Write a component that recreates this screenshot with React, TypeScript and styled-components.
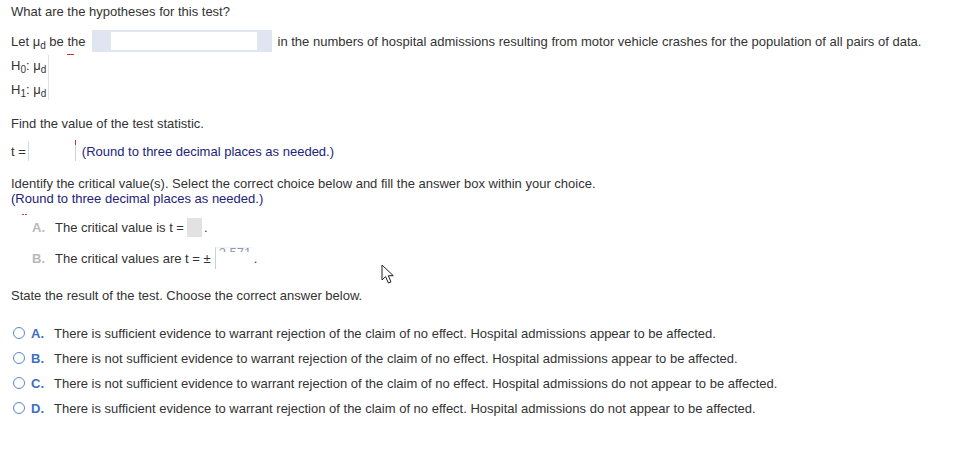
import * as React from "react";
import styled, { createGlobalStyle } from "styled-components";

const GlobalStyle = createGlobalStyle`
  html, body {
    margin: 0;
    padding: 0;
    background: #fff;
  }
  body {
    font-family: "Liberation Sans", Arial, sans-serif;
    font-size: 13px;
    color: #333;
  }
`;

const options = [
  { letter: "A.", text: "There is sufficient evidence to warrant rejection of the claim of no effect. Hospital admissions appear to be affected." },
  { letter: "B.", text: "There is not sufficient evidence to warrant rejection of the claim of no effect. Hospital admissions appear to be affected." },
  { letter: "C.", text: "There is not sufficient evidence to warrant rejection of the claim of no effect. Hospital admissions do not appear to be affected." },
  { letter: "D.", text: "There is sufficient evidence to warrant rejection of the claim of no effect. Hospital admissions do not appear to be affected." },
];

const Mu = () => (
  <>
    μ<Sub>d</Sub>
  </>
);

const App = () => {
  return (
    <>
      <GlobalStyle />
      <Page>
        <Line>What are the hypotheses for this test?</Line>

        <LetRow>
          <span>
            Let <Mu /> be the
          </span>
          <SelectBox>
            <SelectInner />
          </SelectBox>
          <span>
            in the numbers of hospital admissions resulting from motor vehicle crashes for the population of all pairs
            of data.
          </span>
        </LetRow>

        <HypoBlock>
          <HypoLabels>
            <HypoLabel>
              H<Sub>0</Sub>: <Mu />
            </HypoLabel>
            <HypoLabel>
              H<Sub>1</Sub>: <Mu />
            </HypoLabel>
          </HypoLabels>
          <HypoField>
            <RedDash />
          </HypoField>
        </HypoBlock>

        <Line $top={16}>Find the value of the test statistic.</Line>

        <TRow>
          <span>t =</span>
          <TInput>
            <RedTick />
          </TInput>
          <Note>(Round to three decimal places as needed.)</Note>
        </TRow>

        <Para $top={15}>
          Identify the critical value(s). Select the correct choice below and fill the answer box within your choice.
          <Note as="div">(Round to three decimal places as needed.)</Note>
        </Para>

        <Choices>
          <RedDots>
            <Dot />
            <Dot />
          </RedDots>
          <ChoiceRow>
            <ChoiceLetter>A.</ChoiceLetter>
            <span>The critical value is t =</span>
            <GrayBox />
            <span>.</span>
          </ChoiceRow>
          <ChoiceRow>
            <ChoiceLetter>B.</ChoiceLetter>
            <span>The critical values are t = ±</span>
            <ValueBox>
              <Clip>2.571</Clip>
            </ValueBox>
            <span>.</span>
          </ChoiceRow>
        </Choices>

        <Line $top={20}>State the result of the test. Choose the correct answer below.</Line>

        <Options>
          {options.map((o) => (
            <OptionRow key={o.letter}>
              <Radio />
              <OptionLetter>{o.letter}</OptionLetter>
              <span>{o.text}</span>
            </OptionRow>
          ))}
        </Options>

        <Cursor width="15" height="21" viewBox="0 0 15 21">
          <path
            d="M1 1 L1 16 L4.6 12.6 L7.4 19 L10 17.9 L7.3 11.7 L12.3 11.7 Z"
            fill="#fff"
            stroke="#222"
            strokeWidth="1"
            strokeLinejoin="round"
          />
        </Cursor>
      </Page>
    </>
  );
};

const Page = styled.div`
  position: relative;
  width: 965px;
  height: 465px;
  box-sizing: border-box;
  padding: 4px 11px 0;
  overflow: hidden;
`;

const Line = styled.div<{ $top?: number }>`
  line-height: 16px;
  margin-top: ${(p) => p.$top ?? 0}px;
`;

const Para = styled.div<{ $top?: number }>`
  line-height: 15px;
  margin-top: ${(p) => p.$top ?? 0}px;
`;

const Sub = styled.sub`
  font-size: 10px;
  vertical-align: -3px;
  line-height: 0;
`;

const LetRow = styled.div`
  display: flex;
  align-items: center;
  height: 22px;
  margin-top: 10px;
  gap: 6px;
  white-space: nowrap;
`;

const SelectBox = styled.div`
  width: 180px;
  height: 22px;
  box-sizing: border-box;
  padding: 2px 15px 2px 19px;
  background: #dfe6f0;
`;

const SelectInner = styled.div`
  height: 100%;
  background: #fff;
`;

const HypoBlock = styled.div`
  display: flex;
  margin-top: 2px;
`;

const HypoLabels = styled.div`
  display: flex;
  flex-direction: column;
  padding-top: 4px;
  gap: 8px;
`;

const HypoLabel = styled.div`
  line-height: 16px;
  height: 16px;
`;

const HypoField = styled.div`
  position: relative;
  width: 40px;
  height: 45px;
  margin-left: 2px;
  margin-top: 1px;
  border-left: 1px solid #e2e2e2;
`;

const RedDash = styled.span`
  position: absolute;
  left: 18px;
  top: -1px;
  width: 7px;
  height: 1px;
  background: #c0392b;
`;

const TRow = styled.div`
  display: flex;
  align-items: center;
  height: 20px;
  margin-top: 9px;
`;

const TInput = styled.div`
  position: relative;
  width: 48px;
  height: 20px;
  margin-left: 2px;
  box-sizing: border-box;
  border-left: 1px solid #d3dbe6;
  border-right: 1px solid #c9d2de;
  margin-right: 6px;
`;

const RedTick = styled.span`
  position: absolute;
  right: -1px;
  top: -1px;
  width: 1px;
  height: 5px;
  background: #c0392b;
`;

const Note = styled.span`
  color: #23237a;
`;

const Choices = styled.div`
  position: relative;
  display: flex;
  flex-direction: column;
  gap: 11px;
  margin-top: 11px;
  padding-left: 21px;
`;

const RedDots = styled.span`
  position: absolute;
  left: 11px;
  top: -3px;
  display: flex;
  gap: 1px;
`;

const Dot = styled.span`
  width: 2px;
  height: 1px;
  background: #d04040;
`;

const ChoiceRow = styled.div`
  display: flex;
  align-items: center;
  height: 20px;
  white-space: nowrap;
`;

const ChoiceLetter = styled.span`
  width: 23px;
  color: #b8b8b8;
  font-weight: bold;
`;

const GrayBox = styled.span`
  width: 15px;
  height: 19px;
  margin: 0 2px 0 3px;
  background: #e2e2e2;
`;

const ValueBox = styled.span`
  width: 37px;
  height: 22px;
  margin: 0 2px 0 4px;
  box-sizing: border-box;
  border-left: 1px solid #c8d3e2;
  border-top: 1px solid #eef1f5;
  background: #fff;
  padding-left: 3px;
`;

const Clip = styled.span`
  display: block;
  height: 4px;
  overflow: hidden;
  line-height: 10px;
  color: #8c9aab;
`;

const Options = styled.div`
  display: flex;
  flex-direction: column;
  gap: 7px;
  margin-top: 20px;
`;

const OptionRow = styled.div`
  display: flex;
  align-items: center;
  height: 18px;
  white-space: nowrap;
`;

const Radio = styled.span`
  width: 10px;
  height: 10px;
  margin-left: 2px;
  margin-right: 6px;
  border: 1.5px solid #5b86c8;
  border-radius: 50%;
  background: #fff;
`;

const OptionLetter = styled.span`
  width: 23px;
  color: #3d6fc0;
  font-weight: bold;
`;

const Cursor = styled.svg`
  position: absolute;
  left: 381px;
  top: 264px;
`;

export default App;
